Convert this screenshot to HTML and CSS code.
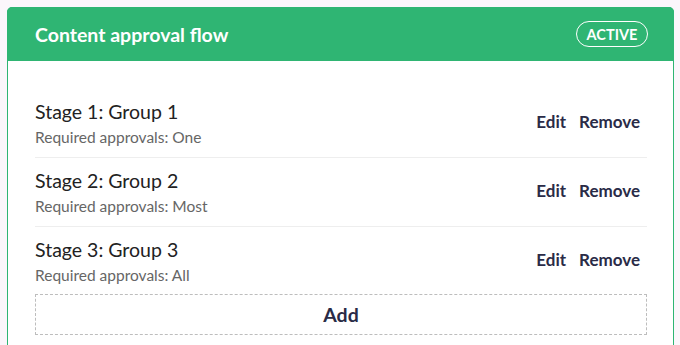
FILE: index.html
```html
<!DOCTYPE html>
<html>
<head>
<meta charset="utf-8">
<link rel="stylesheet" href="styles.css">
</head>
<body>
<div class="card">
  <div class="card-header">
    <h1 class="card-title">Content approval flow</h1>
    <span class="badge">ACTIVE</span>
  </div>
  <div class="card-body">
    <div class="stage">
      <div class="stage-info">
        <div class="stage-name">Stage 1: Group 1</div>
        <div class="stage-sub">Required approvals: One</div>
      </div>
      <div class="actions"><a class="action">Edit</a><a class="action">Remove</a></div>
    </div>
    <div class="stage">
      <div class="stage-info">
        <div class="stage-name">Stage 2: Group 2</div>
        <div class="stage-sub">Required approvals: Most</div>
      </div>
      <div class="actions"><a class="action">Edit</a><a class="action">Remove</a></div>
    </div>
    <div class="stage last">
      <div class="stage-info">
        <div class="stage-name">Stage 3: Group 3</div>
        <div class="stage-sub">Required approvals: All</div>
      </div>
      <div class="actions"><a class="action">Edit</a><a class="action">Remove</a></div>
    </div>
    <div class="add">Add</div>
  </div>
</div>
</body>
</html>
```
FILE: styles.css
```css
* { box-sizing: border-box; }
html, body { margin: 0; padding: 0; }
body {
  background: #fbf6fb;
  font-family: Lato, "Open Sans", sans-serif;
  padding: 7px 6px 0 7px;
}
.card {
  background: #fff;
  border: 1px solid #2fb573;
  border-radius: 5px 5px 0 0;
  height: 345px;
}
.card-header {
  background: #2fb573;
  height: 54px;
  margin: -1px -1px 0 -1px;
  border-radius: 5px 5px 0 0;
  display: flex;
  align-items: center;
  justify-content: space-between;
  padding: 0 26px 0 28px;
}
.card-title {
  margin: 0;
  color: #fff;
  font-size: 19.5px;
  font-weight: 700;
}
.badge {
  color: #fff;
  font-size: 14.5px;
  font-weight: 700;
  border: 1.5px solid #fff;
  border-radius: 14px;
  height: 26px;
  width: 72px;
  display: flex;
  align-items: center;
  justify-content: center;
}
.card-body {
  padding: 28px 26px 0 27px;
}
.stage {
  display: flex;
  align-items: center;
  justify-content: space-between;
  padding: 12px 0 11px;
  border-bottom: 1px solid #eeeeee;
}
.stage.last { border-bottom: none; padding-bottom: 10px; }
.stage-name {
  font-size: 19.5px;
  line-height: 22px;
  color: #222;
}
.stage-sub {
  font-size: 15.5px;
  line-height: 18px;
  color: #666;
  margin-top: 5px;
}
.actions {
  display: flex;
  gap: 13px;
  padding-right: 7px;
  margin-bottom: 5px;
}
.action {
  font-size: 17px;
  font-weight: 700;
  color: #2a2b47;
}
.add {
  height: 41px;
  border: 1px dashed #bdbdbd;
  display: flex;
  align-items: center;
  justify-content: center;
  font-size: 19.5px;
  font-weight: 700;
  color: #2a2b47;
}
```
